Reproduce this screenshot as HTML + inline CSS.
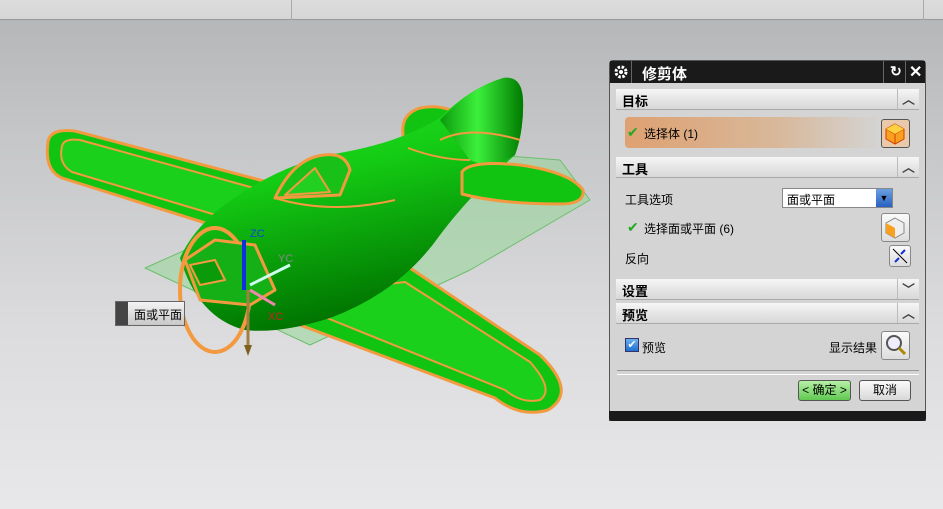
<!DOCTYPE html>
<html><head><meta charset="utf-8">
<style>
*{margin:0;padding:0;box-sizing:border-box}
body{width:943px;height:509px;overflow:hidden;font-family:"Liberation Sans","Noto Sans CJK SC",sans-serif;font-size:12px;position:relative;background:linear-gradient(#b6b7b9 20px,#c3c4c6 120px,#dcdcde 330px,#e8e8ea 509px)}
.top{position:absolute;left:0;top:0;width:943px;height:20px;background:linear-gradient(#dcdcdc,#d6d6d6);border-bottom:1px solid #999}
.dlg{position:absolute;left:609px;top:60px;width:317px;height:361px;background:#d4d4d4;border:1px solid #555;border-radius:4px 4px 0 0}
.title{height:22px;background:#1a1a1a;color:#fff;font-weight:bold;font-size:15px;position:relative}
.sec{position:absolute;left:6px;width:303px;height:21px;background:linear-gradient(#f6f6f6,#e6e6e6 50%,#d8d8d8);border-bottom:1px solid #aaa;font-weight:bold;font-size:13px;padding:2px 0 0 6px}
.sec i{position:absolute;right:0;top:0;width:22px;height:20px;border-left:1px solid #bbb;font-style:normal;text-align:center;color:#444;font-size:13px}
.t{position:absolute;font-size:12px;color:#000}
.ibtn{position:absolute;width:29px;height:29px;border:1px solid #888;border-radius:3px;background:linear-gradient(#fafafa,#ddd)}
</style></head><body>
<div class="top"></div>
<div style="position:absolute;left:291px;top:0;width:1px;height:20px;background:#fff;border-left:1px solid #aaa"></div>
<div style="position:absolute;left:923px;top:0;width:1px;height:20px;background:#fff;border-left:1px solid #aaa"></div>

<svg width="943" height="509" style="position:absolute;left:0;top:0">
<defs>
<linearGradient id="fg" x1="0" y1="0" x2="0.3" y2="1"><stop offset="0" stop-color="#2ee82e"/><stop offset=".45" stop-color="#14cc14"/><stop offset="1" stop-color="#007400"/></linearGradient>
<linearGradient id="tg" x1="0" y1="0" x2="1" y2="0"><stop offset="0" stop-color="#0a9a0a"/><stop offset=".45" stop-color="#3cf03c"/><stop offset="1" stop-color="#007a00"/></linearGradient>
</defs>
<g stroke="#f39a40" stroke-width="3" stroke-linejoin="round">
<!-- plane -->
<path d="M145,268 L320,190 L430,150 L560,160 L590,200 L470,270 L310,345 Z" fill="#8fd88f" fill-opacity=".5" stroke="#6bbf6b" stroke-width="1"/>
<!-- left wing -->
<path d="M48,142 Q50,128 75,131 L305,192 L298,252 L62,178 Q44,170 48,142Z" fill="#12c412"/>
<path d="M62,146 Q64,138 80,140 L290,198 L286,236 L72,172 Q58,164 62,146Z" fill="#1ad01a" stroke-width="2"/>
<!-- left stabilizer -->
<path d="M404,140 Q398,115 420,108 Q445,103 465,118 L455,145Z" fill="#12c412"/>
<!-- right lower wing -->
<path d="M295,282 L410,268 L540,355 Q578,392 548,410 Q520,418 495,398 L300,325Z" fill="#12c412"/>
<path d="M320,292 L405,282 L530,362 Q555,390 540,400 Q522,404 505,390 L322,316Z" fill="#1ad01a" stroke-width="2"/>
<!-- fuselage -->
<path d="M180,258 Q198,218 250,188 Q295,160 345,152 Q400,142 440,118 Q470,88 503,78 Q522,75 523,100 Q524,130 515,155 Q470,195 440,235 Q400,292 330,318 Q280,334 245,330 Q198,318 180,258Z" fill="url(#fg)" stroke="none"/>
<path d="M440,120 Q470,88 503,78 Q522,75 523,100 Q524,130 515,155 Q490,170 470,160 Q455,140 440,120Z" fill="url(#tg)" stroke="none"/>
<path d="M440,140 Q470,125 520,140" fill="none" stroke-width="2"/>
<path d="M408,148 Q440,160 470,160" fill="none" stroke-width="2"/>
<!-- right stabilizer -->
<path d="M462,172 Q470,160 520,165 Q570,172 583,190 Q585,204 560,204 Q500,204 462,194Z" fill="#12c412"/>
<!-- canopy -->
<path d="M275,198 Q292,162 318,156 Q345,150 350,170 L340,195Z" fill="#18c018"/>
<path d="M285,195 L315,168 L330,192Z" fill="#22d022" stroke-width="2"/>
<path d="M275,198 Q330,215 395,200" fill="none" stroke-width="2"/>
<!-- front ring -->
<ellipse cx="215" cy="290" rx="35" ry="62" fill="none" stroke-width="4"/>
<path d="M185,260 L215,240 L255,245 L275,290 L250,305 L200,300Z" fill="#15b015"/>
<path d="M190,265 L215,260 L225,280 L200,285Z" fill="#0a9a0a" stroke-width="2"/>
</g>
<line x1="244" y1="240" x2="244" y2="290" stroke="#1030e0" stroke-width="4"/>
<line x1="248" y1="290" x2="248" y2="345" stroke="#a08040" stroke-width="3"/>
<path d="M244,345 L252,345 L248,356Z" fill="#806020"/>
<line x1="250" y1="285" x2="290" y2="265" stroke="#cfe" stroke-width="3"/>
<line x1="250" y1="290" x2="275" y2="305" stroke="#e8a" stroke-width="3"/>
<text x="250" y="237" fill="#1040e0" font-size="11" font-family="Liberation Sans">ZC</text>
<text x="278" y="262" fill="#888" font-size="11" font-family="Liberation Sans">YC</text>
<text x="268" y="320" fill="#d02020" font-size="11" font-family="Liberation Sans">XC</text>
</svg>

<div style="position:absolute;left:115px;top:301px;width:70px;height:25px;border:1px solid #666;background:linear-gradient(#f4f4f4,#c8c8c8)">
<div style="position:absolute;left:0;top:0;width:12px;height:23px;background:#444"></div>
<span style="position:absolute;left:18px;top:4px;font-size:12px">面或平面</span></div>

<div class="dlg">
<div class="title"><svg width="16" height="16" style="position:absolute;left:3px;top:3px"><circle cx="8" cy="8" r="5" fill="none" stroke="#fff" stroke-width="3" stroke-dasharray="2.5 1.5"/><circle cx="8" cy="8" r="2" fill="#fff"/></svg>
<div style="position:absolute;left:21px;top:0;width:1px;height:22px;background:#666"></div>
<span style="position:absolute;left:32px;top:2px">修剪体</span>
<div style="position:absolute;left:273px;top:0;width:1px;height:22px;background:#666"></div>
<span style="position:absolute;left:280px;top:2px;font-size:14px">↻</span>
<div style="position:absolute;left:295px;top:0;width:1px;height:22px;background:#666"></div>
<span style="position:absolute;left:299px;top:1px;font-size:16px">✕</span></div>
<div class="sec" style="top:28px">目标<i>︿</i></div>
<div style="position:absolute;left:15px;top:56px;width:255px;height:31px;border-radius:4px;background:linear-gradient(90deg,#dea172,#d8b89a 60%,#d4d4d4)"></div>
<span class="t" style="left:17px;top:63px;color:#2a2;font-size:14px">✔</span>
<span class="t" style="left:34px;top:64px">选择体 (1)</span>
<div class="ibtn" style="left:271px;top:58px;background:#e9c9a9;border-color:#555"><svg width="27" height="27"><path d="M13,4 L22,9 L22,19 L13,24 L4,19 L4,9Z" fill="#f9a020" stroke="#d04000"/><path d="M4,9 L13,14 L22,9 M13,14 V24" fill="none" stroke="#d04000"/><path d="M4,9 L13,4 L22,9 L13,14Z" fill="#ffd040"/></svg></div>
<div class="sec" style="top:96px">工具<i>︿</i></div>
<span class="t" style="left:15px;top:130px">工具选项</span>
<div style="position:absolute;left:172px;top:127px;width:111px;height:20px;background:#fff;border:1px solid #888;font-size:12px;padding:2px 4px">面或平面
<div style="position:absolute;right:0;top:0;width:16px;height:18px;background:linear-gradient(#6aa0e0,#2a60c0);color:#000;font-size:9px;text-align:center;line-height:18px">▼</div></div>
<span class="t" style="left:17px;top:158px;color:#2a2;font-size:14px">✔</span>
<span class="t" style="left:34px;top:159px">选择面或平面 (6)</span>
<div class="ibtn" style="left:271px;top:152px"><svg width="27" height="27"><path d="M13,4 L22,9 L22,19 L13,24 L4,19 L4,9Z" fill="#eee" stroke="#888"/><path d="M4,9 L13,14 L13,24 L4,19Z" fill="#f9a020"/></svg></div>
<span class="t" style="left:15px;top:189px">反向</span>
<div class="ibtn" style="left:279px;top:184px;width:22px;height:22px"><svg width="20" height="20"><line x1="3" y1="3" x2="17" y2="17" stroke="#000"/><path d="M5,16 L9,12 M15,4 L11,8" stroke="#1030d0" stroke-width="2"/></svg></div>
<div class="sec" style="top:218px">设置<i>﹀</i></div>
<div class="sec" style="top:242px">预览<i>︿</i></div>
<div style="position:absolute;left:15px;top:277px;width:14px;height:14px;border:1px solid #336;background:linear-gradient(#6ab0f0,#2070d0);color:#fff;font-size:11px;line-height:12px;text-align:center">✔</div>
<span class="t" style="left:32px;top:278px">预览</span>
<span class="t" style="left:219px;top:278px">显示结果</span>
<div class="ibtn" style="left:271px;top:270px"><svg width="27" height="27"><circle cx="12" cy="11" r="7" fill="#eef" stroke="#555" stroke-width="2"/><line x1="17" y1="16" x2="23" y2="22" stroke="#a80" stroke-width="3"/></svg></div>
<div style="position:absolute;left:7px;top:309px;width:302px;height:1px;background:#999"></div>
<div style="position:absolute;left:7px;top:313px;width:302px;height:1px;background:#fff"></div>
<div style="position:absolute;left:188px;top:319px;width:53px;height:21px;border:1px solid #555;border-radius:3px;background:linear-gradient(#b8f0a8,#60c850);text-align:center;line-height:19px;font-size:12px">&lt; 确定 &gt;</div>
<div style="position:absolute;left:249px;top:319px;width:52px;height:21px;border:1px solid #555;border-radius:3px;background:linear-gradient(#fafafa,#d8d8d8);text-align:center;line-height:19px;font-size:12px">取消</div>
<div style="position:absolute;left:-1px;top:350px;width:317px;height:10px;background:#1a1a1a;border-radius:0 0 3px 3px"></div>
</div>
</body></html>
